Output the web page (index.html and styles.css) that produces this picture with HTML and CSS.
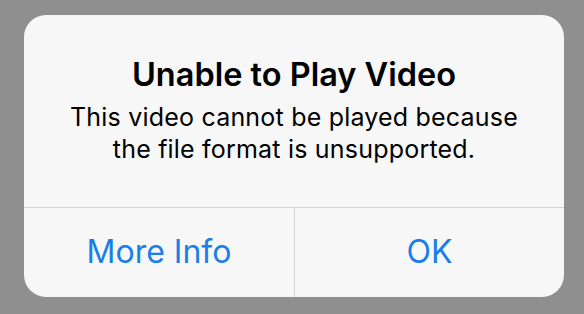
FILE: index.html
```html
<!DOCTYPE html>
<html>
<head>
<meta charset="utf-8">
<link rel="stylesheet" href="styles.css">
</head>
<body>
<div class="alert">
  <div class="alert-content">
    <div class="alert-title">Unable to Play Video</div>
    <div class="alert-message">This video cannot be played because<br>the file format is unsupported.</div>
  </div>
  <div class="alert-actions">
    <div class="alert-button">More Info</div>
    <div class="alert-button">OK</div>
  </div>
</div>
</body>
</html>
```
FILE: styles.css
```css
html, body {
  margin: 0;
  padding: 0;
}
body {
  background: #8f8f8f;
  width: 584px;
  height: 314px;
  box-sizing: border-box;
  padding: 15px 20px 0 24px;
  font-family: Inter, "Noto Sans", sans-serif;
}
.alert {
  width: 540px;
  height: 282px;
  background: #f7f7f7;
  border-radius: 22px;
  display: flex;
  flex-direction: column;
  overflow: hidden;
}
.alert-content {
  height: 192px;
  box-sizing: border-box;
  padding-top: 41px;
  text-align: center;
  color: #000;
}
.alert-title {
  font-size: 32.5px;
  font-weight: 600;
  line-height: 38px;
}
.alert-message {
  margin-top: 7px;
  font-size: 25px;
  letter-spacing: 0.2px;
  line-height: 32px;
  font-weight: 400;
}
.alert-actions {
  flex: 1;
  display: grid;
  grid-template-columns: 1fr 1fr;
  border-top: 1px solid #d4d4d4;
}
.alert-button {
  display: flex;
  align-items: center;
  justify-content: center;
  color: #1b7ee8;
  font-size: 32px;
  padding-bottom: 2px;
}
.alert-button + .alert-button {
  border-left: 1px solid #d4d4d4;
}
```
